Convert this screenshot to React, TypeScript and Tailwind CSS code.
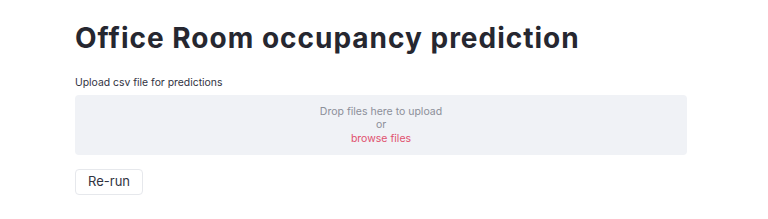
import React from "react";

export default function App() {
  return (
    <div className="w-[768px] h-[219px] bg-white overflow-hidden" style={{ fontFamily: "Inter, 'Liberation Sans', sans-serif" }}>
      <div className="pl-[75px] pr-[81px] pt-[20px]">
        <h1 className="text-[28px] leading-[36px] font-bold text-[#262730] tracking-[1px]">
          Office Room occupancy prediction
        </h1>
        <div className="mt-[20px] text-[10.4px] leading-[14px] text-[#31333f]">Upload csv file for predictions</div>
        <div className="mt-[5px] h-[60px] rounded-[4px] bg-[#f0f2f6] flex flex-col items-center justify-center text-[10.5px] leading-[13.5px]">
          <div className="text-[#8c8f99]">Drop files here to upload</div>
          <div className="text-[#8c8f99]">or</div>
          <div className="text-[#e0506e]">browse files</div>
        </div>
        <button className="mt-[14px] h-[26px] w-[68px] rounded-[4px] border border-[#e6e8ec] bg-white text-[13px] text-[#31333f] flex items-center justify-center">
          Re-run
        </button>
      </div>
    </div>
  );
}
